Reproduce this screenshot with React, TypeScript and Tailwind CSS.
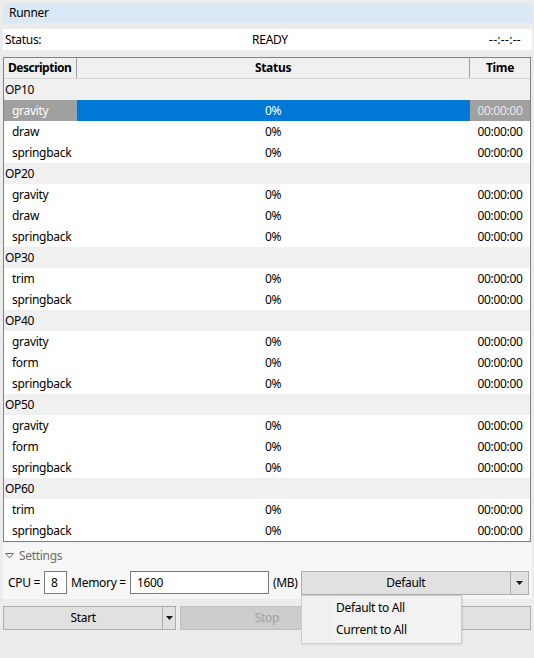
import React from 'react';

type Row = { label: string; group?: boolean };

const groups: [string, string[]][] = [
  ['OP10', ['gravity', 'draw', 'springback']],
  ['OP20', ['gravity', 'draw', 'springback']],
  ['OP30', ['trim', 'springback']],
  ['OP40', ['gravity', 'form', 'springback']],
  ['OP50', ['gravity', 'form', 'springback']],
  ['OP60', ['trim', 'springback']],
];

const rows: Row[] = groups.flatMap(([op, steps]) => [
  { label: op, group: true },
  ...steps.map((s) => ({ label: s })),
]);

function Caret() {
  return (
    <svg width="7" height="4" viewBox="0 0 7 4">
      <path d="M0 0h7L3.5 4z" fill="#1a1a1a" />
    </svg>
  );
}

export default function App() {
  return (
    <div
      className="relative w-[534px] h-[658px] bg-[#ececec] pt-[3px] pl-[3px] pr-[1px] text-[12px] tracking-[-0.3px] text-black overflow-hidden whitespace-nowrap"
      style={{ fontFamily: '"Noto Sans", "Open Sans", sans-serif' }}
    >
      <div className="h-[20px] bg-[#dbe8f5] flex items-center pl-[6px]">Runner</div>

      <div className="mt-[6px] mr-[1px] h-[21px] bg-white flex items-center px-[2px]">
        <span className="w-[200px]">Status:</span>
        <span className="flex-1 text-center pr-[154px]">READY</span>
        <span className="pr-[9px] tracking-[0.3px]">--:--:--</span>
      </div>

      <div className="mt-[7px] mr-[2px] border border-[#828282] bg-white">
        <div className="grid grid-cols-[73px_1fr_60px] h-[21px] bg-[#f0f0f0] font-bold border-b border-[#d5d5d5]">
          <div className="flex items-center pl-[4px] border-r border-[#a0a0a0] tracking-[-0.5px]">Description</div>
          <div className="flex items-center justify-center border-r border-[#a0a0a0]">Status</div>
          <div className="flex items-center justify-center">Time</div>
        </div>
        {rows.map((r, i) =>
          r.group ? (
            <div key={i} className="h-[21px] bg-[#f0f0f0] flex items-center pl-[1px]">
              {r.label}
            </div>
          ) : (
            <div key={i} className="grid grid-cols-[73px_1fr_60px] h-[21px]">
              <div className={`flex items-center pl-[8px] ${i === 1 ? 'bg-[#a0a0a0] text-white' : ''}`}>
                {r.label}
              </div>
              <div className={`flex items-center justify-center pr-[1px] ${i === 1 ? 'bg-[#0078d7] text-white' : ''}`}>
                0%
              </div>
              <div className={`flex items-center justify-center ${i === 1 ? 'bg-[#a0a0a0] text-[#e8e8e8]' : ''}`}>
                00:00:00
              </div>
            </div>
          )
        )}
      </div>

      <div className="mt-[1px] mr-[1px] h-[56px] bg-[#f7f7f7] pt-[4px]">
        <div className="flex items-center h-[18px] pl-[2px] text-[#6d6d6d]">
          <svg width="9" height="6" viewBox="0 0 9 6" className="mr-[5px]">
            <path d="M0.5 0.5h8L4.5 5z" fill="none" stroke="#707070" />
          </svg>
          Settings
        </div>
        <div className="mt-[6px] flex items-center h-[23px] pl-[5px]">
          <span className="shrink-0">CPU =</span>
          <div className="shrink-0 ml-[4px] w-[23px] h-[23px] bg-white border border-[#7a7a7a] flex items-center pl-[6px]">8</div>
          <span className="shrink-0 ml-[4px]">Memory =</span>
          <div className="shrink-0 ml-[4px] w-[139px] h-[23px] bg-white border border-[#7a7a7a] flex items-center pl-[6px]">1600</div>
          <span className="shrink-0 ml-[4px]">(MB)</span>
          <div className="ml-[3px] flex-1 mr-[3px] h-[24px] bg-[#e1e1e1] border border-[#adadad] flex">
            <div className="flex-1 flex items-center justify-center">Default</div>
            <div className="w-[18px] border-l border-[#adadad] flex items-center justify-center">
              <Caret />
            </div>
          </div>
        </div>
      </div>

      <div className="mt-[7px] grid grid-cols-3 gap-[4px] h-[24px] mr-[2px]">
        <div className="bg-[#e1e1e1] border border-[#adadad] flex">
          <div className="flex-1 flex items-center justify-center pb-[1px]">Start</div>
          <div className="w-[13px] border-l border-[#adadad] flex items-center justify-center">
            <Caret />
          </div>
        </div>
        <div className="bg-[#cccccc] border border-[#bfbfbf] flex items-center justify-center pb-[1px] text-[#a0a0a0]">
          Stop
        </div>
        <div className="bg-[#e1e1e1] border border-[#adadad]" />
      </div>

      <div className="absolute left-[301px] top-[595px] w-[161px] h-[49px] bg-[#f2f2f2] border border-[#cccccc] shadow-[1px_1px_2px_rgba(0,0,0,0.08)] flex">
        <div className="w-[30px] bg-[#f0f0f0]" />
        <div className="flex flex-col pl-[4px] pt-[1px]">
          <div className="h-[22px] flex items-center">Default to All</div>
          <div className="h-[22px] flex items-center">Current to All</div>
        </div>
      </div>
    </div>
  );
}
